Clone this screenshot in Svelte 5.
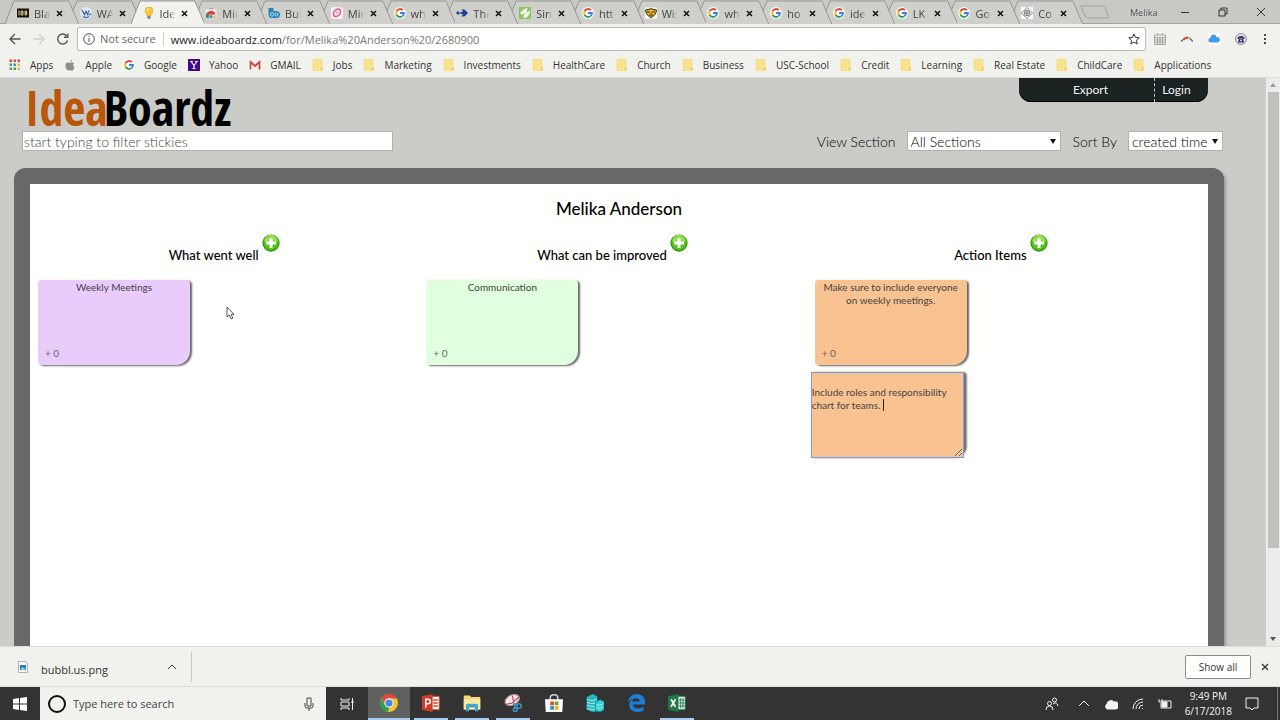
<script>
    const tabs = [
        { title: "Bla", icon: "black" },
        { title: "WA", icon: "wac" },
        { title: "Ide", icon: "bulb", active: true },
        { title: "Mir", icon: "webstore" },
        { title: "Bul", icon: "bubbl" },
        { title: "Mir", icon: "pink" },
        { title: "wh", icon: "google" },
        { title: "The", icon: "arrows" },
        { title: "Sin", icon: "leaf" },
        { title: "htt", icon: "google" },
        { title: "Wis", icon: "mask" },
        { title: "wh", icon: "google" },
        { title: "ho", icon: "google" },
        { title: "ide", icon: "google" },
        { title: "LK", icon: "google" },
        { title: "Go", icon: "google" },
        { title: "Co", icon: "diamond" },
    ];

    const bookmarks = [
        { label: "Apps", icon: "apps" },
        { label: "Apple", icon: "apple" },
        { label: "Google", icon: "google" },
        { label: "Yahoo", icon: "yahoo" },
        { label: "GMAIL", icon: "gmail" },
        { label: "Jobs", icon: "folder" },
        { label: "Marketing", icon: "folder" },
        { label: "Investments", icon: "folder" },
        { label: "HealthCare", icon: "folder" },
        { label: "Church", icon: "folder" },
        { label: "Business", icon: "folder" },
        { label: "USC-School", icon: "folder" },
        { label: "Credit", icon: "folder" },
        { label: "Learning", icon: "folder" },
        { label: "Real Estate", icon: "folder" },
        { label: "ChildCare", icon: "folder" },
        { label: "Applications", icon: "folder" },
    ];

    const sections = [
        { title: "What went well", tone: "purple", notes: ["Weekly Meetings"] },
        { title: "What can be improved", tone: "green", notes: ["Communication"] },
        {
            title: "Action Items",
            tone: "orange",
            notes: ["Make sure to include everyone on weekly meetings."],
            draft: true,
        },
    ];

    const apps = [
        { name: "Google Chrome", icon: "chrome", open: true, current: true },
        { name: "PowerPoint", icon: "powerpoint", open: true },
        { name: "File Explorer", icon: "explorer", open: true },
        { name: "Snipping Tool", icon: "snip", open: true },
        { name: "Store", icon: "store" },
        { name: "Server", icon: "server" },
        { name: "Edge", icon: "edge" },
        { name: "Excel", icon: "excel", open: true },
    ];

    let filter = $state("");
    let draft = $state("Include roles and responsibility chart for teams.");
</script>

{#snippet icon(name)}
    <svg class="icon" viewBox="0 0 24 24" fill="none" aria-hidden="true">
        {#if name === "google"}
            <circle cx="12" cy="12" r="12" fill="#fff" />
            <path d="M18 6.5A8 8 0 0 0 5 8.5" stroke="#e3402f" stroke-width="3.6" />
            <path d="M5 8.5a8 8 0 0 0 0 7" stroke="#f5b912" stroke-width="3.6" />
            <path d="M5 15.5a8 8 0 0 0 12 2.8" stroke="#31a350" stroke-width="3.6" />
            <path d="M12 12h8a8 8 0 0 1-3 6.3" stroke="#3f7de8" stroke-width="3.6" />
        {:else if name === "black"}
            <path d="M0 3h24v18H0z" fill="#15130d" />
            <path d="M4 7v10M8 8h4v8H8zM8 12h4M16 8h3v8h-3zM16 12h5" stroke="#d8c989" stroke-width="2" />
        {:else if name === "wac"}
            <circle cx="12" cy="12" r="12" fill="#dfe7f3" />
            <path d="M4 6l5 9 3-6 3 6 3-8M17 15q3 2 5-2M6 19q6 4 12 0" stroke="#3d68a8" stroke-width="2.6" />
        {:else if name === "bulb"}
            <path d="M12 0a8 8 0 0 0-8 8c0 4 4 5 4 10h8c0-5 4-6 4-10a8 8 0 0 0-8-8z" fill="#f7c63a" stroke="#d7950e" />
            <path d="M8 8q1-4 4-4" stroke="#fff4bd" stroke-width="2.4" />
            <path d="M8.500 18h7v4l-2 2h-3l-2-2z" fill="#8c8b87" />
        {:else if name === "webstore"}
            <path d="M1 5h22v17H1z" fill="#ececec" />
            <path d="M2 20a10 10 0 0 1 19-6l-9 3z" fill="#dc4437" />
            <path d="M2 20a10 10 0 0 1 3-7l6 9H3z" fill="#2c9e54" />
            <path d="M12 22l9-7q2 3 0 7z" fill="#f6c526" />
            <circle cx="12" cy="19" r="4" fill="#4a83e8" stroke="#fff" />
            <path d="M8 3h8" stroke="#aaa" stroke-width="2" />
        {:else if name === "bubbl"}
            <path d="M1 2h10v6h7q6 1 6 7t-6 7H6q-5-1-5-6z" fill="#2c83b5" />
            <circle cx="8" cy="15" r="3.500" stroke="#bfe0f2" stroke-width="2" />
            <circle cx="17" cy="15" r="3" stroke="#bfe0f2" stroke-width="2" />
        {:else if name === "pink"}
            <rect width="24" height="24" rx="5" fill="#fbeef3" />
            <path d="M6 18q-3-7 3-12 5-3 9-1 3 8-3 12-4 3-9 1z" stroke="#e2558f" stroke-width="3" />
            <circle cx="12" cy="11" r="2.500" fill="#f2a5c3" />
        {:else if name === "arrows"}
            <path d="M11 5h6l7 7-7 7h-6l3-5h-5v-4h5z" fill="#1c3f95" />
            <path d="M0 12l4-4 4 4-4 4z" fill="#1c3f95" />
        {:else if name === "leaf"}
            <path d="M0 0h24v24H0z" fill="#8cc461" />
            <path d="M2 12q7-9 15-10l-2 9q-6 0-9 5zM9 22l1-8 12-7q0 8-7 14z" fill="#f5fbef" />
        {:else if name === "mask"}
            <path d="M0 1h24v22H0z" fill="#fff" />
            <path d="M1 6q11-5 22 0-1 11-11 15Q2 17 1 6z" fill="#e9b92d" stroke="#2a2413" stroke-width="2" />
            <path d="M4 10q4-2 7 2M20 10q-4-2-7 2M8 16h8" stroke="#2a2413" stroke-width="2" />
        {:else if name === "diamond"}
            <path d="M0 0h24v24H0z" fill="#fff" />
            <path d="M12 1l11 11-11 11L1 12z" stroke="#555e58" stroke-width="1.600" />
            <circle cx="12" cy="12" r="5.500" stroke="#45594c" stroke-width="1.600" />
            <path d="M8 12h8M12 8v8" stroke="#45594c" stroke-width="1.600" />
        {:else if name === "apps"}
            <path d="M1 1h5v5H1zM9 1h5v5H9zM17 1h5v5h-5z" fill="#dc4a3b" />
            <path d="M1 9h5v5H1z" fill="#43a65f" />
            <path d="M9 9h5v5H9z" fill="#4a7fd8" />
            <path d="M17 9h5v5h-5z" fill="#e9b93a" />
            <path d="M1 17h5v5H1zM9 17h5v5H9z" fill="#43a65f" />
            <path d="M17 17h5v5h-5z" fill="#e9b93a" />
        {:else if name === "apple"}
            <path d="M16 1q0 4-4 5 0-4 4-5zM12 8q5-3 8 1-4 3 1 8-3 8-6 6-3-1-6 0-5-1-6-8-1-8 5-8z" fill="#8e8e8c" />
        {:else if name === "yahoo"}
            <path d="M0 0h24v24H0z" fill="#42098f" />
            <path d="M6 5l6 8 6-8M12 13v6M4.500 5h5M14.500 5h5M9 19h6" stroke="#fff" stroke-width="2.2" />
        {:else if name === "gmail"}
            <path d="M1 4h22v17H1z" fill="#f5f2f0" />
            <path d="M3 21V6l9 8 9-8v15" stroke="#cf4337" stroke-width="3.4" />
        {:else if name === "folder"}
            <path d="M2 0h18v18h2v6H2z" fill="#f9e28c" stroke="#edd06d" />
            <path d="M19 17v5" stroke="#d9b64c" stroke-width="1.500" />
        {:else if name === "chrome"}
            <circle cx="12" cy="12" r="12" fill="#f5c629" />
            <path d="M1.600 6A12 12 0 0 1 22.400 6H12a6 6 0 0 0-5 9z" fill="#db4a3c" />
            <path d="M1.600 6l5.200 9A6 6 0 0 0 13 18l-3 6A12 12 0 0 1 1.600 6z" fill="#2f9e55" />
            <circle cx="12" cy="12" r="5.500" fill="#4a86e0" stroke="#f3f3f3" stroke-width="1.500" />
        {:else if name === "powerpoint"}
            <path d="M13 3h10v18H13z" fill="#fff" stroke="#d04423" stroke-width="1.500" />
            <path d="M15 8h6M15 12h6M15 16h6" stroke="#d04423" stroke-width="2" />
            <path d="M0 3l14-3v24L0 21z" fill="#cb3d27" />
            <path d="M5 18V7h3q3 0 3 3t-3 3H5" stroke="#fff" stroke-width="2" />
        {:else if name === "explorer"}
            <path d="M1 2h8l2 2h12v17H1z" fill="#f4d878" />
            <path d="M1 7h22v13H1z" fill="#fbe9a0" />
            <path d="M4 23v-8q0-2 2-2h12q2 0 2 2v8h-4v-5H8v5z" fill="#45a6d0" />
        {:else if name === "snip"}
            <ellipse cx="11" cy="8" rx="10" ry="6.500" transform="rotate(-25 11 8)" fill="#f3e9ea" stroke="#c98d91" stroke-width="1.500" />
            <path d="M2 14l9-2 9-8M11 2l2 9" stroke="#b5474d" stroke-width="1.500" />
            <path d="M12 13l4 2M15 12l-1 7" stroke="#3e9ac6" stroke-width="2" />
            <circle cx="20" cy="16" r="3" stroke="#3e9ac6" stroke-width="2" />
            <circle cx="15" cy="21" r="2.500" stroke="#3e9ac6" stroke-width="2" />
        {:else if name === "store"}
            <path d="M7 8V5q0-4 5-4t5 4v3" stroke="#d4d4d4" stroke-width="2" />
            <path d="M0 7h24l-1 17H1z" fill="#fff" />
            <path d="M7 10h5v5H7z" fill="#e0492b" />
            <path d="M13 10h5v5h-5z" fill="#6cab30" />
            <path d="M7 16h5v5H7z" fill="#2d8fd3" />
            <path d="M13 16h5v5h-5z" fill="#efb21f" />
        {:else if name === "server"}
            <path d="M1 4l8-4 6 3v20l-6 1-8-3z" fill="#22b9c0" />
            <path d="M13 10l6-2 5 2v11l-6 3-5-2z" fill="#35d1d4" stroke="#188f9a" />
            <path d="M1 7l7 2 6-2M1 11l7 2 4-1M1 15l7 2 4-1M1 19l7 2 4-1M14 14l4 1 5-2M14 18l4 1 5-2" stroke="#b2f0ef" stroke-width="1.200" />
        {:else if name === "edge"}
            <path d="M1 11C3 3 8 0 13 0c7 0 11 5 11 11v3H8c0 5 8 7 14 3v5c-8 4-19 2-19-7 0-4 2-7 6-9-1 1-2 3-2 4h10c0-6-10-6-16 1z" fill="#1c7fd6" />
        {:else if name === "excel"}
            <path d="M12 3h11v18H12z" fill="#fff" stroke="#217346" stroke-width="1.500" />
            <path d="M17 5v14M20 5v14M14 8h8M14 12h8M14 16h8" stroke="#217346" stroke-width="1.200" />
            <path d="M0 3l14-3v24L0 21z" fill="#1f7a45" />
            <path d="M4 7l6 10M10 7L4 17" stroke="#fff" stroke-width="2.200" />
        {:else if name === "calendar"}
            <path d="M1 4h22v19H1zM1 9h22M7 0v5M17 0v5M7 9v14M12 9v14M17 9v14M1 14h22M1 18h22" stroke="#a4a5a1" stroke-width="2" />
        {:else if name === "arc"}
            <path d="M0 17q3-3 6-5" stroke="#34845a" stroke-width="3" />
            <path d="M5 13q4-4 10-4" stroke="#e04a37" stroke-width="4" />
            <path d="M14 9q3 0 4 2" stroke="#eab42c" stroke-width="4" />
            <path d="M18 11l6 6" stroke="#3c6fc4" stroke-width="3" />
        {:else if name === "cloud"}
            <rect width="24" height="24" rx="4" fill="#fff" />
            <path d="M5 19a4 4 0 0 1 0-9 6 6 0 0 1 12-2 5 5 0 0 1 2 11z" fill="#3e9cec" />
        {:else if name === "phone"}
            <circle cx="12" cy="12" r="11" fill="#dcdde6" stroke="#8d8fa5" stroke-width="2" />
            <path d="M4 10q8-8 16 0l-4 2-1-2H9l-1 2zM6 19l2-8h8l2 8z" fill="#2d3160" />
            <circle cx="12" cy="15" r="2" fill="#dcdde6" />
        {:else if name === "plus"}
            <circle cx="12" cy="12" r="11.500" fill="#2f9410" />
            <circle cx="12" cy="11.500" r="10" fill="#54c21b" />
            <path d="M3 10a9 9 0 0 1 18 0q-9 5-18 0z" fill="#8fdf4c" />
            <path d="M12 5.500v13M5.500 12h13" stroke="#fff" stroke-width="4" />
        {:else if name === "image"}
            <path d="M3 1h14l4 4v18H3z" fill="#fff" stroke="#9b9c98" stroke-width="1.500" />
            <path d="M6 8h12v10H6z" fill="#2378bd" />
            <path d="M7 17l4-5 3 3 2-1 1 3z" fill="#bfe3f7" />
        {/if}
    </svg>
{/snippet}

<div class="window">
    <header class="chrome">
        <div class="tab-strip">
            <div class="tabs">
                {#each tabs as tab, i}
                    <div class="tab" class:active={tab.active} style:z-index={tab.active ? 30 : 20 - i}>
                        <svg class="tab-shape" viewBox="0 0 74 24" preserveAspectRatio="none" aria-hidden="true">
                            <path d="M0 24L9 1H64L74 24" vector-effect="non-scaling-stroke" />
                        </svg>
                        {@render icon(tab.icon)}
                        <span class="tab-title">{tab.title}</span>
                        <button class="tab-close" aria-label="Close tab">
                            <svg viewBox="0 0 7 7"><path d="M1 1l5 5M6 1L1 6" /></svg>
                        </button>
                    </div>
                {/each}
            </div>
            <button class="new-tab" aria-label="New tab">
                <svg viewBox="0 0 30 14"><path d="M1 1h21q2 0 3 2l4 10H8q-2 0-3-2z" /></svg>
            </button>
            <span class="profile">Melika</span>
            <div class="window-buttons">
                <button aria-label="Minimize"><svg viewBox="0 0 10 10"><path d="M1 5.500h8" /></svg></button>
                <button aria-label="Restore">
                    <svg viewBox="0 0 10 10"><path d="M1 3h6v6H1zM3 3V1h6v6H7" /></svg>
                </button>
                <button aria-label="Close"><svg viewBox="0 0 10 10"><path d="M1 1l8 8M9 1L1 9" /></svg></button>
            </div>
        </div>

        <div class="toolbar">
            <button class="nav" aria-label="Back"><svg viewBox="0 0 12 12"><path d="M11.500 6H1M6 1L1 6l5 5" /></svg></button>
            <button class="nav faded" aria-label="Forward">
                <svg viewBox="0 0 12 12"><path d="M.5 6H11M6 1l5 5-5 5" /></svg>
            </button>
            <button class="nav" aria-label="Reload">
                <svg viewBox="0 0 12 12"><path d="M10.500 7.500a5 5 0 1 1-.8-4.500M10.800.5v3.800H7" /></svg>
            </button>
            <div class="omnibox">
                <svg class="info" viewBox="0 0 12 12"><circle cx="6" cy="6" r="5.300" /><path d="M6 5v4M6 2.800v1.200" /></svg>
                <span class="insecure">Not secure</span>
                <span class="url">www.ideaboardz.com<span class="path">/for/Melika%20Anderson%20/2680900</span></span>
                <button class="star" aria-label="Bookmark this page">
                    <svg viewBox="0 0 12 12"><path d="M6 1l1.500 3.400 3.700.4-2.800 2.500.8 3.700L6 9.100 2.800 11l.8-3.700L.8 4.800l3.700-.4z" /></svg>
                </button>
            </div>
            <div class="extensions">
                {#each ["calendar", "arc", "cloud", "phone"] as name}
                    <button aria-label={name}>{@render icon(name)}</button>
                {/each}
                <button aria-label="Menu" class="menu"><i></i><i></i><i></i></button>
            </div>
        </div>

        <nav class="bookmarks">
            {#each bookmarks as bookmark}
                <a href="#top">{@render icon(bookmark.icon)}<span>{bookmark.label}</span></a>
            {/each}
        </nav>
    </header>

    <div class="viewport">
        <main class="page">
            <div class="page-top">
                <h1 class="logo"><span>Idea</span>Boardz</h1>
                <div class="site-menu">
                    <a class="export" href="#export">Export</a>
                    <a class="login" href="#login">Login</a>
                </div>
            </div>

            <div class="controls">
                <input
                    class="filter"
                    type="text"
                    placeholder="start typing to filter stickies"
                    aria-label="Filter stickies"
                    bind:value={filter}
                />
                <label for="section">View Section</label>
                <span class="picker section-picker">
                    <select id="section"><option>All Sections</option></select>
                </span>
                <label for="sort">Sort By</label>
                <span class="picker sort-picker">
                    <select id="sort"><option>created time</option></select>
                </span>
            </div>

            <div class="board">
                <h2>Melika Anderson</h2>
                <div class="sections">
                    {#each sections as section}
                        <section>
                            <div class="section-head">
                                <h3>{section.title}</h3>
                                <button class="add" aria-label="Add note">{@render icon("plus")}</button>
                            </div>
                            {#each section.notes as note}
                                <article class="note {section.tone}">
                                    <p>{note}</p>
                                    <button class="vote">+ 0</button>
                                </article>
                            {/each}
                            {#if section.draft}
                                <div class="draft">
                                    <textarea aria-label="New note" spellcheck="false" bind:value={draft}></textarea>
                                </div>
                            {/if}
                        </section>
                    {/each}
                </div>
                <svg class="pointer" viewBox="0 0 9 14"><path d="M1 1v10l2.300-2L5 13l1.800-.8L5.200 8.400H8z" /></svg>
            </div>
        </main>
        <div class="scrollbar">
            <span class="arrow up"></span>
            <span class="thumb"></span>
            <span class="arrow down"></span>
        </div>
    </div>

    <div class="downloads">
        <button class="file">
            {@render icon("image")}
            <span>bubbl.us.png</span>
            <svg class="caret" viewBox="0 0 10 6"><path d="M1 5l4-4 4 4" /></svg>
        </button>
        <button class="show-all">Show all</button>
        <button class="dismiss" aria-label="Close downloads">
            <svg viewBox="0 0 8 8"><path d="M1 1l6 6M7 1L1 7" /></svg>
        </button>
    </div>

    <footer class="taskbar">
        <button class="start" aria-label="Start">
            <svg viewBox="0 0 14 14"><path d="M0 2l6-.9v5.400H0zM7 1l7-1v6.500H7zM0 7.500h6v5.400L0 12zM7 7.500h7V14l-7-1z" /></svg>
        </button>
        <label class="search">
            <span class="cortana"></span>
            <input type="text" placeholder="Type here to search" />
            <svg viewBox="0 0 10 14"><path d="M3 1h4v8H3zM1 6v3q0 2 2 2h4q2 0 2-2V6M5 11v3" /></svg>
        </label>
        <button class="task-view" aria-label="Task view">
            <svg viewBox="0 0 14 14"><path d="M1 1v2h8V1M1 5h8v4H1zM1 13v-2h8v2M12.500 1v12M11 5h3" /></svg>
        </button>
        <div class="apps">
            {#each apps as app}
                <button aria-label={app.name} class:open={app.open} class:current={app.current}>
                    {@render icon(app.icon)}
                </button>
            {/each}
        </div>
        <div class="tray">
            <svg class="people" viewBox="0 0 14 14"><circle cx="4.500" cy="6.500" r="2" /><circle cx="9.500" cy="3" r="2" /><path d="M1 13q0-4 3.500-4T8 13M8 7q4-3 5 2" /></svg>
            <svg viewBox="0 0 14 14"><path d="M2 9l5-5 5 5" /></svg>
            <svg viewBox="0 0 14 14"><path class="solid" d="M3 12a3 3 0 0 1 0-5 4 4 0 0 1 7-2 3.500 3.500 0 0 1 2 7z" /></svg>
            <svg viewBox="0 0 14 14"><path d="M2 12A10 10 0 0 1 12 2M5 12a7 7 0 0 1 7-7M8 12a4 4 0 0 1 4-4M11 12l1-1" /></svg>
            <svg viewBox="0 0 14 14"><path d="M3 4h10v7H3V6M1 2v3h3V2" /><path class="solid" d="M4 5h5v5H4z" /></svg>
            <div class="clock"><span>9:49 PM</span><span>6/17/2018</span></div>
            <svg viewBox="0 0 14 14"><path d="M1 1h12v10H9l-2 2-2-2H1z" /></svg>
        </div>
    </footer>
</div>

<style>
    :global(body) {
        margin: 0;
        overflow: hidden;
    }

    .window {
        --ui: "Open Sans", "Noto Sans", sans-serif;
        --hand: Lato, sans-serif;
        height: 100vh;
        display: flex;
        flex-direction: column;
        font-family: var(--ui);
        font-size: 11px;
        color: #333;
        background: #f1f2ee;
    }

    button {
        border: 0;
        padding: 0;
        background: none;
        font: inherit;
        color: inherit;
        display: flex;
        align-items: center;
        justify-content: center;
    }

    a {
        color: inherit;
        text-decoration: none;
    }

    svg {
        fill: none;
        stroke: currentColor;
        flex: none;
        display: block;
    }

    .icon {
        stroke: none;
        width: 12px;
        height: 12px;
    }

    /* browser tabs */
    .tab-strip {
        display: flex;
        align-items: center;
        height: 24px;
        padding-left: 5px;
        background: #c8c9c5;
        box-shadow: inset 0 -1px #a2a39f;
    }

    .tabs {
        display: flex;
        flex: 1;
        min-width: 0;
        height: 24px;
    }

    .tab {
        position: relative;
        flex: 1 1 0;
        min-width: 0;
        display: flex;
        align-items: center;
        gap: 5px;
        padding: 2px 4px 0 12px;
        box-sizing: border-box;
        color: #444;
    }

    .tab-shape {
        position: absolute;
        left: 0;
        top: 0;
        width: calc(100% + 11px);
        height: 24px;
        fill: #cfd0cc;
        stroke: #969793;
    }

    .tab.active .tab-shape {
        fill: #f1f2ee;
    }

    .tab > :global(.icon),
    .tab-title,
    .tab-close {
        position: relative;
    }

    .tab-title {
        flex: 1;
        min-width: 0;
        white-space: nowrap;
        mask-image: linear-gradient(to right, #000 65%, transparent);
    }

    .tab-close {
        width: 9px;
        color: #111;
    }

    .tab-close svg {
        width: 7px;
        height: 7px;
        stroke-width: 1.5;
    }

    .new-tab {
        margin: 0 20px 0 8px;
        color: #a2a39f;
    }

    .new-tab svg {
        width: 30px;
        height: 14px;
    }

    .profile {
        width: 36px;
        font-size: 9px;
        color: #444;
        text-shadow: 0 0 2px #fff;
    }

    .window-buttons {
        display: flex;
    }

    .window-buttons button {
        width: 38px;
        height: 22px;
    }

    .window-buttons svg {
        width: 10px;
        height: 10px;
    }

    /* address bar */
    .toolbar {
        display: flex;
        align-items: center;
        height: 30px;
        padding-left: 9px;
    }

    .nav {
        width: 12px;
        margin-right: 12px;
        color: #555;
    }

    .nav.faded {
        color: #cfd0cc;
    }

    .nav svg {
        width: 12px;
        height: 12px;
        stroke-width: 1.4;
    }

    .nav:nth-child(3) {
        margin-right: 8px;
    }

    .omnibox {
        flex: 1;
        display: flex;
        align-items: center;
        height: 22px;
        padding: 0 5px;
        border: 1px solid #b9bab6;
        border-radius: 2px;
        background: #fffffd;
    }

    .info {
        width: 12px;
        height: 12px;
        color: #555;
    }

    .insecure {
        margin-left: 5px;
        padding-right: 7px;
        border-right: 1px solid #ccc;
        line-height: 14px;
        color: #666;
    }

    .url {
        flex: 1;
        margin-left: 7px;
        color: #222;
    }

    .path {
        color: #777;
    }

    .star svg {
        width: 12px;
        height: 12px;
    }

    .extensions {
        display: flex;
        align-items: center;
    }

    .extensions button {
        width: 27px;
        height: 20px;
    }

    .extensions .menu {
        width: 22px;
        flex-direction: column;
        gap: 2px;
        margin-right: 4px;
    }

    .menu i {
        width: 2px;
        height: 2px;
        background: #444;
    }

    .bookmarks {
        display: flex;
        align-items: center;
        gap: 11px;
        height: 23px;
        padding: 0 9px;
        border-bottom: 1px solid #dcddd9;
        font-size: 10px;
        line-height: 20px;
        white-space: nowrap;
    }

    .bookmarks a {
        display: flex;
        align-items: flex-start;
        gap: 9px;
        height: 22px;
    }

    .bookmarks :global(.icon) {
        margin-top: 4px;
    }

    /* page */
    .viewport {
        flex: 1;
        min-height: 0;
        display: flex;
        background: #cbccc8;
        font-family: var(--hand);
    }

    .page {
        flex: 1;
        min-width: 0;
        display: flex;
        flex-direction: column;
        overflow: hidden;
    }

    .page-top {
        display: flex;
        justify-content: space-between;
        align-items: flex-start;
        height: 53px;
        padding: 0 58px 0 25px;
    }

    .logo {
        margin: 0;
        padding-top: 6px;
        font: 900 48px/48px "Open Sans Condensed", Lato, sans-serif;
        color: #000;
    }

    .logo span {
        position: relative;
        margin-right: -4px;
        color: #b8560b;
    }

    .site-menu {
        display: flex;
        width: 189px;
        border-radius: 0 0 12px 12px;
        background: #1a2321;
        box-shadow: inset 0 -1px #000;
        color: #f4f4f4;
        font-size: 12px;
        line-height: 24px;
    }

    .export {
        flex: 1;
        padding-left: 8px;
        text-align: center;
    }

    .login {
        width: 54px;
        padding-right: 10px;
        box-sizing: border-box;
        border-left: 1px dashed #c4c7c6;
        text-align: center;
    }

    .controls {
        display: flex;
        align-items: center;
        height: 20px;
        padding: 0 43px 0 22px;
        font-size: 14px;
        font-weight: 300;
        color: #000;
    }

    .filter {
        width: 371px;
        height: 20px;
        margin-right: auto;
        padding: 0 1px;
        box-sizing: border-box;
        border: 1px solid #b2b3af;
        background: #fffffd;
        font: 300 14px var(--hand);
    }

    .filter::placeholder {
        color: #444;
    }

    .picker {
        position: relative;
        margin-left: 11px;
    }

    .picker::after {
        content: "";
        position: absolute;
        right: 5px;
        top: 8px;
        border: 3px solid transparent;
        border-top: 5px solid #111;
        border-bottom: 0;
        pointer-events: none;
    }

    .picker select {
        display: block;
        width: 100%;
        height: 20px;
        padding: 0 3px;
        appearance: none;
        border: 1px solid #b2b3af;
        border-radius: 0;
        background: #fffffd;
        font: 300 14px var(--hand);
        color: #000;
    }

    .section-picker {
        width: 154px;
        margin-right: 12px;
    }

    .sort-picker {
        width: 95px;
    }

    .board {
        position: relative;
        flex: 1;
        margin: 17px 42px 0 14px;
        padding-right: 13px;
        border: 16px solid #686868;
        border-bottom: 0;
        border-radius: 12px 12px 0 0;
        background: #fffffd;
        box-shadow: 2px 2px 3px #999;
    }

    h2,
    h3,
    p {
        margin: 0;
    }

    h2 {
        padding: 12px 0 0 13px;
        font-size: 17px;
        font-weight: 500;
        line-height: 26px;
        text-align: center;
        color: #000;
    }

    .sections {
        display: grid;
        grid-template-columns: repeat(3, 1fr);
        margin-top: 12px;
    }

    section {
        display: flex;
        flex-direction: column;
        align-items: flex-start;
        gap: 7px;
        padding-left: 8px;
    }

    .section-head {
        align-self: stretch;
        display: flex;
        justify-content: center;
        gap: 3px;
        height: 39px;
        padding-right: 8px;
    }

    h3 {
        padding-top: 11px;
        font-size: 13px;
        font-weight: 500;
        line-height: 20px;
        color: #000;
    }

    .add {
        align-self: flex-start;
    }

    .add :global(.icon) {
        width: 18px;
        height: 18px;
    }

    .note {
        display: flex;
        flex-direction: column;
        justify-content: space-between;
        align-items: center;
        width: 152px;
        height: 85px;
        padding: 1px 7px 5px;
        box-sizing: border-box;
        border-radius: 4px 4px 14px 4px;
        box-shadow: 2px 1px 2px #666;
        font-size: 10px;
        line-height: 13px;
        text-align: center;
        color: #444;
    }

    .purple {
        background: #eaccfc;
    }

    .green {
        background: #dfffdf;
    }

    .orange {
        background: #f9c291;
    }

    .vote {
        align-self: flex-start;
        color: #666;
    }

    .draft {
        position: relative;
        margin-left: -4px;
        padding-right: 2px;
        border-radius: 4px 4px 12px 4px;
        background: #777;
        box-shadow: 1px 0 2px #888;
    }

    /* text cursor */
    .draft::after {
        content: "";
        position: absolute;
        left: 72px;
        top: 27px;
        width: 1px;
        height: 12px;
        background: #222;
    }

    textarea {
        display: block;
        width: 153px;
        height: 86px;
        padding: 13px 0 0;
        box-sizing: border-box;
        border: 1px solid #7b9adf;
        outline: 0;
        background: #f9c291;
        font: 10px/13px var(--hand);
        color: #444;
    }

    .pointer {
        position: absolute;
        left: 196px;
        top: 122px;
        width: 9px;
        height: 14px;
        fill: #fff;
        stroke: #555;
    }

    .scrollbar {
        display: flex;
        flex-direction: column;
        align-items: center;
        width: 14px;
        background: #ecedea;
    }

    .thumb {
        width: 11px;
        flex: 458;
        background: #bfc0bc;
    }

    .scrollbar::after {
        content: "";
        flex: 84;
        order: 1;
    }

    .arrow {
        margin: 5px 0;
        border: 3px solid transparent;
    }

    .up {
        border-top: 0;
        border-bottom: 4px solid #999;
    }

    .down {
        order: 2;
        border-bottom: 0;
        border-top: 4px solid #555;
    }

    /* downloads shelf */
    .downloads {
        display: flex;
        align-items: center;
        height: 41px;
        padding: 0 11px 0 17px;
        border-bottom: 1px solid #dcddd9;
        border-top: 1px solid #dcddd9;
        box-sizing: border-box;
    }

    .file {
        width: 175px;
        height: 30px;
        margin-right: auto;
        padding-right: 14px;
        box-sizing: border-box;
        border-right: 1px solid #c8c9c5;
    }

    .file span {
        flex: 1;
        margin-left: 12px;
        padding-top: 5px;
        text-align: left;
    }

    .caret {
        width: 10px;
        height: 6px;
    }

    .show-all {
        width: 66px;
        height: 24px;
        margin-right: 10px;
        border: 1px solid #8c8d89;
        border-radius: 2px;
        background: #fffffd;
        font-size: 10px;
    }

    .dismiss svg {
        width: 8px;
        height: 8px;
        stroke-width: 1.3;
    }

    /* taskbar */
    .taskbar {
        display: flex;
        height: 33px;
        background: #333;
        color: #f2f2f2;
    }

    .start {
        width: 40px;
    }

    .start svg {
        width: 14px;
        height: 14px;
        fill: #fff;
        stroke: none;
    }

    .search {
        display: flex;
        align-items: center;
        width: 286px;
        padding: 0 12px 0 8px;
        box-sizing: border-box;
        background: #f1f2ee;
        color: #444;
    }

    .cortana {
        width: 14px;
        height: 14px;
        border: 2px solid #111;
        border-radius: 50%;
    }

    .search input {
        flex: 1;
        min-width: 0;
        margin-left: 7px;
        padding: 0;
        border: 0;
        background: none;
        font: 11px var(--ui);
    }

    .search input::placeholder {
        color: #444;
    }

    .search svg {
        width: 10px;
        height: 14px;
    }

    .task-view {
        width: 42px;
    }

    .task-view svg {
        width: 14px;
        height: 14px;
    }

    .apps {
        display: flex;
        gap: 7px;
    }

    .apps button {
        width: 34px;
        border-bottom: 2px solid transparent;
    }

    .apps .open {
        border-color: #a9cdf0;
    }

    .apps .current {
        width: 42px;
        margin-right: -3px;
        background: #606060;
    }

    .apps :global(.icon) {
        width: 18px;
        height: 18px;
    }

    .tray {
        display: flex;
        align-items: center;
        gap: 13px;
        margin-left: auto;
        padding-right: 18px;
        border-right: 1px solid #777;
        margin-right: 2px;
    }

    .tray svg {
        width: 14px;
        height: 14px;
    }

    .tray .people {
        margin-right: 5px;
    }

    .solid {
        fill: currentColor;
    }

    .clock {
        display: flex;
        flex-direction: column;
        align-items: center;
        font-size: 10px;
        line-height: 15px;
    }
</style>
